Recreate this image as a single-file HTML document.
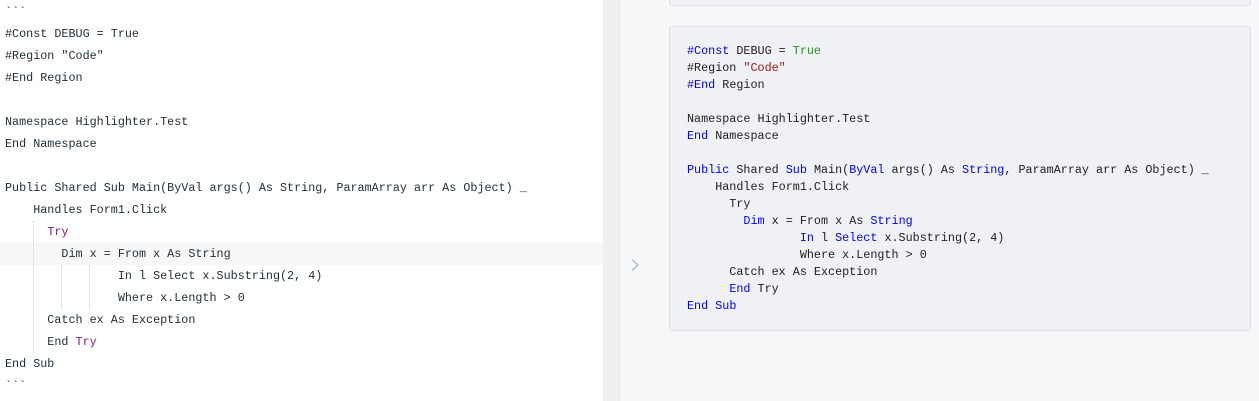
<!DOCTYPE html>
<html><head><meta charset="utf-8"><style>
*{margin:0;padding:0;box-sizing:border-box}
body{width:1259px;height:401px;overflow:hidden;background:#f6f7f9;position:relative;font-family:"Liberation Mono",monospace}
#left{position:absolute;left:0;top:0;width:603px;height:401px;background:#fff;}
#strip{position:absolute;left:603px;top:0;width:17px;height:401px;background:#efefef;border-right:1px solid #e4e6ea}
.ln{position:absolute;left:5px;height:22px;line-height:22px;font-size:11.75px;color:#1f2d36;white-space:pre}
.hl{position:absolute;left:0;top:243px;width:603px;height:22px;background:#f7f7f7}
.g{position:absolute;width:0;border-left:1px dotted #cfcfcf}
.p{color:#7a1e7a}
#box{position:absolute;left:669px;top:26px;width:582px;height:305px;background:#f0f1f4;border:1px solid #dde1e6;border-radius:3px;padding:16px 0 0 17px}
#top{position:absolute;left:669px;top:-10px;width:582px;height:16px;background:#f0f1f4;border:1px solid #dde1e6;border-radius:3px}
pre{font-family:"Liberation Mono",monospace;font-size:11.75px;line-height:17px;color:#1e1e1e}
.k{color:#0000ff}.t{color:#2e8b2e}.s{color:#a31515}
</style></head><body>
<div id="left">
<div class="hl"></div>
<div class="g" style="left:33px;top:221px;height:132px"></div>
<div class="g" style="left:61px;top:265px;height:44px"></div>
<div class="g" style="left:89px;top:265px;height:44px"></div>
<div class="ln" style="top:1px">&#96;&#96;&#96;</div>
<div class="ln" style="top:23px">#Const DEBUG = True</div>
<div class="ln" style="top:45px">#Region "Code"</div>
<div class="ln" style="top:67px">#End Region</div>
<div class="ln" style="top:111px">Namespace Highlighter.Test</div>
<div class="ln" style="top:133px">End Namespace</div>
<div class="ln" style="top:177px">Public Shared Sub Main(ByVal args() As String, ParamArray arr As Object) _</div>
<div class="ln" style="top:199px">    Handles Form1.Click</div>
<div class="ln" style="top:221px">      <span class="p">Try</span></div>
<div class="ln" style="top:243px">        Dim x = From x As String</div>
<div class="ln" style="top:265px">                In l Select x.Substring(2, 4)</div>
<div class="ln" style="top:287px">                Where x.Length &gt; 0</div>
<div class="ln" style="top:309px">      Catch ex As Exception</div>
<div class="ln" style="top:331px">      End <span class="p">Try</span></div>
<div class="ln" style="top:353px">End Sub</div>
<div class="ln" style="top:375px">&#96;&#96;&#96;</div>
</div>
<div id="strip"></div>
<svg style="position:absolute;left:629px;top:258px" width="12" height="14"><path d="M3 1.5 L9 7 L3 12.5" fill="none" stroke="#b4bcc8" stroke-width="1.4"/></svg>
<div id="top"></div>
<div id="box"><pre><span class="k">#Const</span> DEBUG = <span class="t">True</span>
#Region <span class="s">"Code"</span>
<span class="k">#End</span> Region

Namespace Highlighter.Test
<span class="k">End</span> Namespace

<span class="k">Public</span> Shared <span class="k">Sub</span> Main(<span class="k">ByVal</span> args() As <span class="k">String</span>, ParamArray arr As Object) _
    Handles Form1.Click
      Try
        <span class="k">Dim</span> x = From x As <span class="k">String</span>
                <span class="k">In</span> l <span class="k">Select</span> x.Substring(2, 4)
                Where x.Length &gt; 0
      Catch ex As Exception
      <span class="k">End</span> Try
<span class="k">End</span> <span class="k">Sub</span></pre></div>
</body></html>
